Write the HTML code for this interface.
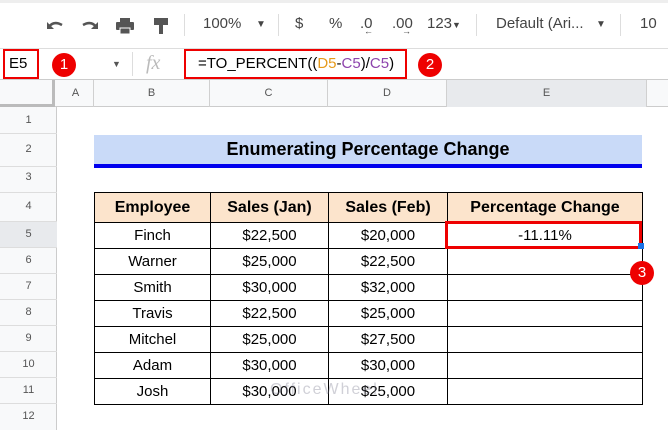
<!DOCTYPE html>
<html><head><style>
*{margin:0;padding:0;box-sizing:border-box}
body{width:668px;height:430px;overflow:hidden;background:#fff;font-family:"Liberation Sans",Arial,sans-serif;position:relative}
.a{position:absolute}
.tb{color:#444;font-size:15px;top:15px}
.grid{position:absolute;background:#e2e2e2}
.rn{position:absolute;left:0;width:57px;text-align:center;font-size:11px;color:#555}
.ch{position:absolute;top:80px;height:27px;line-height:27px;text-align:center;font-size:11px;color:#555;border-right:1px solid #d0d0d0}
table{position:absolute;left:94px;top:192px;border-collapse:collapse;font-size:15px}
td{border:1px solid #000;text-align:center;height:26px;padding:0}
th{border:1px solid #000;background:#fce4cc;font-size:16px;height:30px}
.badge{position:absolute;width:24px;height:24px;border-radius:50%;background:#e00;color:#fff;font-size:15px;text-align:center;line-height:24px}
</style></head><body>
<div class="a" style="top:0;left:0;width:668px;height:3px;background:#eee"></div>
<!-- toolbar -->
<svg class="a" style="left:44px;top:16px" width="130" height="20" viewBox="0 0 130 20">
<path d="M4 12 Q9 4 18 9" stroke="#555" stroke-width="2.5" fill="none"/><path d="M3 6 v7 h7z" fill="#555"/>
<path d="M53 12 Q48 4 39 9" stroke="#555" stroke-width="2.5" fill="none"/><path d="M54 6 v7 h-7z" fill="#555"/>
<rect x="72" y="6" width="18" height="8" rx="1" fill="#555"/><rect x="76" y="2" width="10" height="4" fill="#555"/><rect x="76" y="12" width="10" height="6" fill="#555" stroke="#fff"/>
<rect x="110" y="2" width="14" height="7" fill="#555"/><rect x="115" y="9" width="4" height="9" fill="#555"/>
</svg>
<div class="a" style="left:184px;top:14px;width:1px;height:22px;background:#ddd"></div>
<div class="a tb" style="left:203px">100%</div><div class="a tb" style="left:256px;font-size:10px;top:19px">▼</div>
<div class="a" style="left:278px;top:14px;width:1px;height:22px;background:#ddd"></div>
<div class="a tb" style="left:295px">$</div>
<div class="a tb" style="left:329px">%</div>
<div class="a tb" style="left:360px">.0<span style="font-size:9px;position:absolute;left:4px;top:11px">←</span></div>
<div class="a tb" style="left:392px">.00<span style="font-size:9px;position:absolute;left:10px;top:11px">→</span></div>
<div class="a tb" style="left:427px">123<span style="font-size:9px">▼</span></div>
<div class="a" style="left:476px;top:14px;width:1px;height:22px;background:#ddd"></div>
<div class="a tb" style="left:496px">Default (Ari...</div><div class="a tb" style="left:596px;font-size:10px;top:19px">▼</div>
<div class="a" style="left:620px;top:14px;width:1px;height:22px;background:#ddd"></div>
<div class="a tb" style="left:640px">10</div>
<!-- formula bar -->
<div class="a" style="left:0;top:48px;width:668px;height:1px;background:#ddd"></div>
<div class="a" style="left:3px;top:49px;width:36px;height:30px;border:2px solid #e00;font-size:15px;line-height:26px;padding-left:4px">E5</div>
<div class="badge" style="left:52px;top:53px">1</div>
<div class="a" style="left:112px;top:59px;font-size:9px;color:#555">▼</div>
<div class="a" style="left:132px;top:52px;width:1px;height:24px;background:#ddd"></div>
<div class="a" style="left:146px;top:52px;font-family:'Liberation Serif',serif;font-style:italic;font-size:20px;color:#bbb">fx</div>
<div class="a" style="left:184px;top:49px;width:223px;height:30px;border:2px solid #e00;font-size:15px;line-height:26px;padding-left:12px">=TO_PERCENT((<span style="color:#e69a1b">D5</span>-<span style="color:#8e44ad">C5</span>)/<span style="color:#8e44ad">C5</span>)</div>
<div class="badge" style="left:418px;top:53px">2</div>
<div class="a" style="left:0;top:79px;width:668px;height:1px;background:#ccc"></div>
<!-- column headers -->
<div class="a" style="left:0;top:80px;width:668px;height:27px;background:#f8f9fa;border-bottom:1px solid #ccc"></div>
<div class="a" style="left:0;top:80px;width:55px;height:27px;border-right:3px solid #bbb;border-bottom:3px solid #bbb;background:#f8f9fa"></div>
<div class="ch" style="left:58px;width:36px">A</div>
<div class="ch" style="left:94px;width:116px">B</div>
<div class="ch" style="left:210px;width:118px">C</div>
<div class="ch" style="left:328px;width:119px">D</div>
<div class="ch" style="left:447px;width:200px;background:#e8eaed">E</div>
<!-- row headers -->
<div class="a" style="left:0;top:107px;width:57px;height:323px;background:#f8f9fa;border-right:1px solid #ccc"></div>
<div class="a" style="left:0;top:221px;width:57px;height:26px;background:#e8eaed"></div>
<div class="rn" style="top:114px">1</div><div class="rn" style="top:143px">2</div><div class="rn" style="top:171px">3</div>
<div class="rn" style="top:200px">4</div><div class="rn" style="top:228px">5</div><div class="rn" style="top:254px">6</div>
<div class="rn" style="top:280px">7</div><div class="rn" style="top:306px">8</div><div class="rn" style="top:332px">9</div>
<div class="rn" style="top:358px">10</div><div class="rn" style="top:384px">11</div><div class="rn" style="top:410px">12</div>
<div class="a" style="left:0;top:133px;width:57px;height:1px;background:#ddd"></div>
<div class="a" style="left:0;top:166px;width:57px;height:1px;background:#ddd"></div>
<div class="a" style="left:0;top:192px;width:57px;height:1px;background:#ddd"></div>
<div class="a" style="left:0;top:221px;width:57px;height:1px;background:#ddd"></div>
<div class="a" style="left:0;top:247px;width:57px;height:1px;background:#ddd"></div>
<div class="a" style="left:0;top:273px;width:57px;height:1px;background:#ddd"></div>
<div class="a" style="left:0;top:299px;width:57px;height:1px;background:#ddd"></div>
<div class="a" style="left:0;top:325px;width:57px;height:1px;background:#ddd"></div>
<div class="a" style="left:0;top:351px;width:57px;height:1px;background:#ddd"></div>
<div class="a" style="left:0;top:377px;width:57px;height:1px;background:#ddd"></div>
<div class="a" style="left:0;top:403px;width:57px;height:1px;background:#ddd"></div>
<!-- title -->
<div class="a" style="left:94px;top:135px;width:548px;height:33px;background:#c9daf8;border-bottom:4px solid #0000ee;text-align:center;font-weight:bold;font-size:18px;line-height:29px">Enumerating Percentage Change</div>
<table>
<tr><th style="width:116px">Employee</th><th style="width:118px">Sales (Jan)</th><th style="width:119px">Sales (Feb)</th><th style="width:195px">Percentage Change</th></tr>
<tr><td>Finch</td><td>$22,500</td><td>$20,000</td><td>-11.11%</td></tr>
<tr><td>Warner</td><td>$25,000</td><td>$22,500</td><td></td></tr>
<tr><td>Smith</td><td>$30,000</td><td>$32,000</td><td></td></tr>
<tr><td>Travis</td><td>$22,500</td><td>$25,000</td><td></td></tr>
<tr><td>Mitchel</td><td>$25,000</td><td>$27,500</td><td></td></tr>
<tr><td>Adam</td><td>$30,000</td><td>$30,000</td><td></td></tr>
<tr><td>Josh</td><td>$30,000</td><td>$25,000</td><td></td></tr>
</table>
<div class="a" style="left:445px;top:221px;width:197px;height:28px;border:3px solid #e00"></div>
<div class="a" style="left:638px;top:243px;width:6px;height:6px;background:#1a73e8"></div>
<div class="badge" style="left:630px;top:261px">3</div>
<div class="a" style="left:270px;top:381px;font-size:16px;color:rgba(120,120,140,0.35);letter-spacing:2px">OfficeWheel</div>
</body></html>
